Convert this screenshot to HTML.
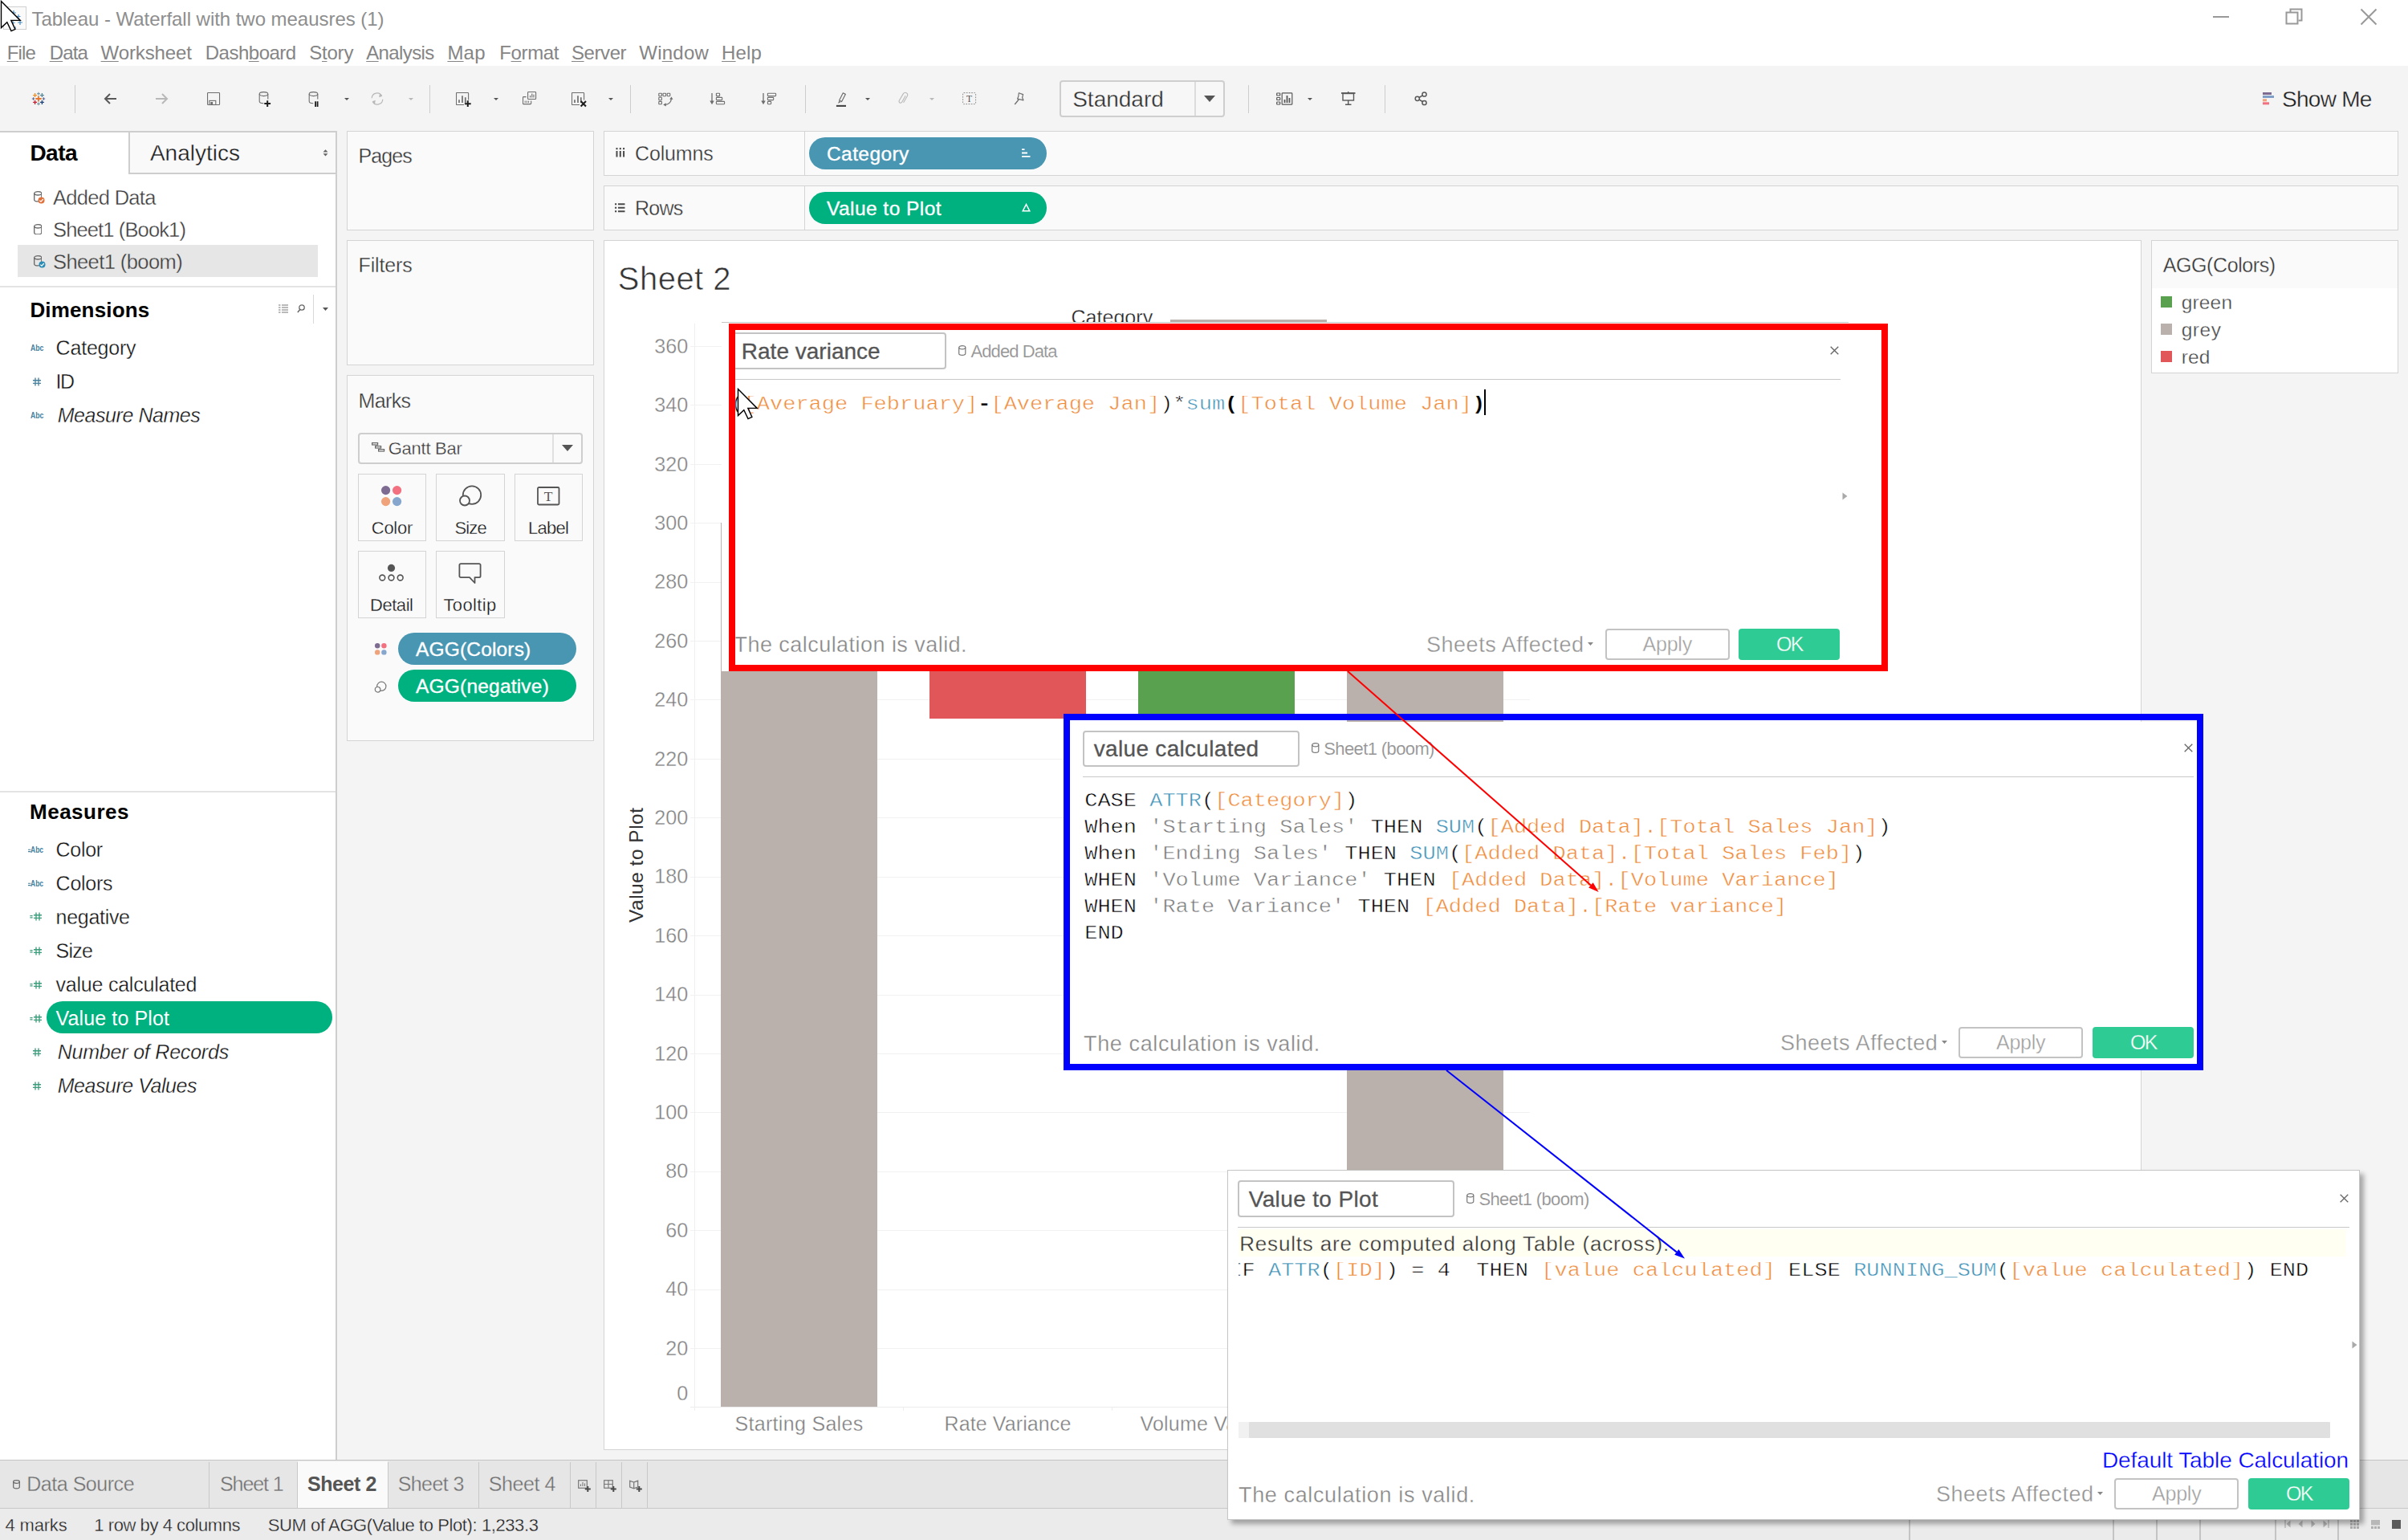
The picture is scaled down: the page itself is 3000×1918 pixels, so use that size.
<!DOCTYPE html>
<html lang="en"><head><meta charset="utf-8"><title>Tableau - Waterfall with two meausres (1)</title>
<style>
html,body{margin:0;padding:0;}
body{width:3000px;height:1918px;position:relative;overflow:hidden;background:#f4f4f4;font-family:"Liberation Sans",sans-serif;}
div,span.t,svg.i{position:absolute;box-sizing:border-box;}
span.t{white-space:pre;display:block;}
u{text-decoration:underline;text-underline-offset:2px;text-decoration-thickness:1.2px;}
</style></head><body>
<header aria-label="Title bar">
<div style="left:0px;top:0px;width:3000px;height:82px;background:#fff;"></div>
<svg class="i" style="left:4px;top:8px;" width="31" height="31" viewBox="0 0 31 31"><rect x="0.5" y="0.5" width="28" height="28" fill="#fafafa" stroke="#d0d0d0"/><g stroke="#4e8fc0" stroke-width="1.2"><path d="M13 5v6M10 8h6M19 10v5M16.5 12.5h5M12 18v5M9.5 20.5h5M21 17v6M18 20h6M15 25v3"/></g></svg>
<span class="t" style="left:39.50px;top:12.48px;font-size:24px;line-height:24px;color:#8e8e8e;letter-spacing:-0.039px;">Tableau - Waterfall with two meausres (1)</span>
<div style="left:2757px;top:20px;width:20px;height:2px;background:#999;"></div>
<svg class="i" style="left:2847px;top:10px;" width="22" height="22" viewBox="0 0 22 22"><path d="M6.5 5.5 V1.5 H20.5 V15.5 H16.5" fill="none" stroke="#999" stroke-width="2"/><rect x="1.5" y="5.5" width="14" height="14" fill="none" stroke="#999" stroke-width="2"/></svg>
<svg class="i" style="left:2940px;top:10px;" width="22" height="22" viewBox="0 0 22 22"><path d="M1.5 1.5 L20.5 20.5 M20.5 1.5 L1.5 20.5" stroke="#999" stroke-width="2" fill="none"/></svg>
</header>
<nav aria-label="Menu bar">
<span class="t" style="left:8.70px;top:53.98px;font-size:24px;line-height:24px;color:#858585;letter-spacing:-0.843px;"><u>F</u>ile</span>
<span class="t" style="left:61.70px;top:53.98px;font-size:24px;line-height:24px;color:#858585;letter-spacing:-0.849px;"><u>D</u>ata</span>
<span class="t" style="left:125.60px;top:53.98px;font-size:24px;line-height:24px;color:#858585;letter-spacing:-0.119px;"><u>W</u>orksheet</span>
<span class="t" style="left:255.80px;top:53.98px;font-size:24px;line-height:24px;color:#858585;letter-spacing:-0.512px;">Dash<u>b</u>oard</span>
<span class="t" style="left:385.20px;top:53.98px;font-size:24px;line-height:24px;color:#858585;letter-spacing:-0.203px;">S<u>t</u>ory</span>
<span class="t" style="left:456.20px;top:53.98px;font-size:24px;line-height:24px;color:#858585;letter-spacing:-0.608px;"><u>A</u>nalysis</span>
<span class="t" style="left:557.40px;top:53.98px;font-size:24px;line-height:24px;color:#858585;letter-spacing:0.204px;"><u>M</u>ap</span>
<span class="t" style="left:622.30px;top:53.98px;font-size:24px;line-height:24px;color:#858585;letter-spacing:-0.385px;">F<u>o</u>rmat</span>
<span class="t" style="left:712.00px;top:53.98px;font-size:24px;line-height:24px;color:#858585;letter-spacing:-0.415px;"><u>S</u>erver</span>
<span class="t" style="left:796.30px;top:53.98px;font-size:24px;line-height:24px;color:#858585;letter-spacing:0.223px;">Wi<u>n</u>dow</span>
<span class="t" style="left:899.10px;top:53.98px;font-size:24px;line-height:24px;color:#858585;letter-spacing:0.135px;"><u>H</u>elp</span>
</nav>
<section aria-label="Toolbar">
<svg class="i" style="left:38.5px;top:114px;" width="18" height="18" viewBox="0 0 18 18"><path d="M5.4 9H12.6M9 5.4V12.6" stroke="#e8762c" stroke-width="1.8"/><path d="M7.2 2.6H10.8M9 0.8V4.4" stroke="#7099a6" stroke-width="1.1"/><path d="M7.2 15.4H10.8M9 13.6V17.2" stroke="#7099a6" stroke-width="1.1"/><path d="M0.8 9H4.4M2.6 7.2V10.8" stroke="#5b6591" stroke-width="1.1"/><path d="M13.6 9H17.2M15.4 7.2V10.8" stroke="#5b6591" stroke-width="1.1"/><path d="M2.0999999999999996 4.6H7.1M4.6 2.0999999999999996V7.1" stroke="#eb912c" stroke-width="1.4"/><path d="M10.9 4.6H15.9M13.4 2.0999999999999996V7.1" stroke="#59879b" stroke-width="1.4"/><path d="M2.0999999999999996 13.4H7.1M4.6 10.9V15.9" stroke="#c72035" stroke-width="1.4"/><path d="M10.9 13.4H15.9M13.4 10.9V15.9" stroke="#1f447e" stroke-width="1.4"/></svg>
<div style="left:92.9px;top:106px;width:1.2px;height:35px;background:#cdcdcd;"></div>
<svg class="i" style="left:129.0px;top:116.0px;" width="17" height="14" viewBox="0 0 17 14"><path d="M16 7 H2 M8 1 L2 7 L8 13" fill="none" stroke="#595959" stroke-width="2"/></svg>
<svg class="i" style="left:193.0px;top:116.0px;" width="17" height="14" viewBox="0 0 17 14"><path d="M1 7 H15 M9 1 L15 7 L9 13" fill="none" stroke="#b8b8b8" stroke-width="2"/></svg>
<svg class="i" style="left:258px;top:115px;" width="17" height="17" viewBox="0 0 17 17"><rect x="0.55" y="0.55" width="15" height="15" rx="0.8" fill="none" stroke="#6e6e6e" stroke-width="1.1"/><rect x="2.8" y="10.4" width="8" height="5.1" fill="none" stroke="#6e6e6e" stroke-width="1.1"/><rect x="4.3" y="12" width="2.8" height="3.4" fill="#6e6e6e"/></svg>
<svg class="i" style="left:322px;top:114px;" width="18" height="20" viewBox="0 0 18 20"><ellipse cx="6.5" cy="3.1" rx="5.3" ry="2.5" fill="none" stroke="#6e6e6e" stroke-width="1.1"/><path d="M1.2 3.1 V12.2 A5.3 2.5 0 0 0 6.3 14.7" fill="none" stroke="#6e6e6e" stroke-width="1.1"/><path d="M11.8 3.1 V9.4" fill="none" stroke="#6e6e6e" stroke-width="1.1"/><path d="M7.3 15.1h7.8M11.2 11.2v7.8" stroke="#1e1e1e" stroke-width="2" fill="none"/></svg>
<svg class="i" style="left:384.4px;top:114px;" width="18" height="20" viewBox="0 0 18 20"><ellipse cx="6.5" cy="3.1" rx="5.3" ry="2.5" fill="none" stroke="#6e6e6e" stroke-width="1.1"/><path d="M1.2 3.1 V12.2 A5.3 2.5 0 0 0 6.3 14.7" fill="none" stroke="#6e6e6e" stroke-width="1.1"/><path d="M11.8 3.1 V9.4" fill="none" stroke="#6e6e6e" stroke-width="1.1"/><path d="M9.1 12.2v6.7M11.6 12.2v6.7" stroke="#1e1e1e" stroke-width="1.8" fill="none"/></svg>
<svg class="i" style="left:428.5px;top:122.0px;" width="6" height="3" viewBox="0 0 6 3"><path d="M0 0 H6 L3.0 3 Z" fill="#555"/></svg>
<svg class="i" style="left:461px;top:114px;" width="18" height="18" viewBox="0 0 18 18"><path d="M2.2 8.2 A6.6 6.6 0 0 1 14.6 5.4 M15.8 9.8 A6.6 6.6 0 0 1 3.4 12.6" fill="none" stroke="#b8b8b8" stroke-width="1.2"/><path d="M12 2.6 L15.3 5.8 L11.2 7.2 Z" fill="#b8b8b8"/><path d="M6 15.4 L2.7 12.2 L6.8 10.8 Z" fill="#b8b8b8"/></svg>
<svg class="i" style="left:508.5px;top:122.0px;" width="6" height="3" viewBox="0 0 6 3"><path d="M0 0 H6 L3.0 3 Z" fill="#b8b8b8"/></svg>
<div style="left:534.9px;top:106px;width:1.2px;height:35px;background:#cdcdcd;"></div>
<svg class="i" style="left:568px;top:115px;" width="20" height="20" viewBox="0 0 20 20"><path d="M10 15.55 H1.3 a0.8 0.8 0 0 1 -0.8 -0.8 V1.3 a0.8 0.8 0 0 1 0.8 -0.8 H14.8 a0.8 0.8 0 0 1 0.8 0.8 V9.5" fill="none" stroke="#6e6e6e" stroke-width="1.1"/><path d="M4 12.9v-3.7M8 12.9v-8.6M11.8 12.9v-6.6" stroke="#6e6e6e" stroke-width="1.7"/><path d="M10.9 14.2h7.8M14.8 10.3v7.8" stroke="#1e1e1e" stroke-width="2"/></svg>
<svg class="i" style="left:614.5px;top:122.0px;" width="6" height="3" viewBox="0 0 6 3"><path d="M0 0 H6 L3.0 3 Z" fill="#555"/></svg>
<svg class="i" style="left:651px;top:114px;" width="18" height="18" viewBox="0 0 18 18"><rect x="6.6" y="0.55" width="10" height="9" rx="0.8" fill="#f4f4f4" stroke="#6e6e6e" stroke-width="1.1"/><path d="M9.6 7.4v-2.4M11.8 7.4v-5M14 7.4v-3.6" stroke="#6e6e6e" stroke-width="1.1"/><path d="M4.6 6.6 H1.3 a0.8 0.8 0 0 0 -0.8 0.8 V14.8 a0.8 0.8 0 0 0 0.8 0.8 H9.9 a0.8 0.8 0 0 0 0.8 -0.8 V11.6" fill="none" stroke="#6e6e6e" stroke-width="1.1"/><path d="M3.2 14v-2.4M5.4 14v-2.4M7.6 14v-2.4" stroke="#6e6e6e" stroke-width="1"/></svg>
<svg class="i" style="left:712.2px;top:115px;" width="20" height="20" viewBox="0 0 20 20"><path d="M10 15.55 H1.3 a0.8 0.8 0 0 1 -0.8 -0.8 V1.3 a0.8 0.8 0 0 1 0.8 -0.8 H14.8 a0.8 0.8 0 0 1 0.8 0.8 V9.5" fill="none" stroke="#6e6e6e" stroke-width="1.1"/><path d="M4 12.9v-3.7M8 12.9v-8.6M11.8 12.9v-6.6" stroke="#6e6e6e" stroke-width="1.7"/><path d="M11.6 11l6.4 6.4M18 11l-6.4 6.4" stroke="#1e1e1e" stroke-width="2.1"/></svg>
<svg class="i" style="left:758.0px;top:122.0px;" width="6" height="3" viewBox="0 0 6 3"><path d="M0 0 H6 L3.0 3 Z" fill="#555"/></svg>
<div style="left:784.9px;top:106px;width:1.2px;height:35px;background:#cdcdcd;"></div>
<svg class="i" style="left:820px;top:115px;" width="19" height="18" viewBox="0 0 19 18"><rect x="0.8" y="1.3" width="3.6" height="3.4" rx="0.6" fill="none" stroke="#6e6e6e" stroke-width="1.1"/><rect x="6" y="1.3" width="3.6" height="3.4" rx="0.6" fill="none" stroke="#6e6e6e" stroke-width="1.1"/><rect x="11.2" y="1.3" width="3.6" height="3.4" rx="0.6" fill="none" stroke="#6e6e6e" stroke-width="1.1"/><rect x="0.8" y="6.3" width="3.6" height="3.4" rx="0.6" fill="none" stroke="#6e6e6e" stroke-width="1.1"/><rect x="0.8" y="11.4" width="3.6" height="3.4" rx="0.6" fill="none" stroke="#6e6e6e" stroke-width="1.1"/><path d="M16.2 8.2 C16.4 12 13 15.2 8.6 15.4" fill="none" stroke="#6e6e6e" stroke-width="1.3"/><path d="M14.2 8.6 L16.6 5.4 L18.4 9 Z M9.6 13.2 L6.2 15.5 L9.8 17.6 Z" fill="#6e6e6e"/></svg>
<svg class="i" style="left:884.2px;top:115px;" width="20" height="17" viewBox="0 0 20 17"><path d="M3 1 V13" stroke="#6e6e6e" stroke-width="1.3" fill="none"/><path d="M0.3 10.6 L3 15.2 L5.7 10.6 Z" fill="#6e6e6e"/><rect x="8.4" y="1.3" width="4.2" height="3.3" rx="0.6" fill="none" stroke="#6e6e6e" stroke-width="1.1"/><rect x="8.4" y="6.35" width="7.3" height="3.3" rx="0.6" fill="none" stroke="#6e6e6e" stroke-width="1.1"/><rect x="8.4" y="11.4" width="10.2" height="3.3" rx="0.6" fill="none" stroke="#6e6e6e" stroke-width="1.1"/></svg>
<svg class="i" style="left:948.2px;top:115px;" width="20" height="17" viewBox="0 0 20 17"><path d="M3 1 V13" stroke="#6e6e6e" stroke-width="1.3" fill="none"/><path d="M0.3 10.6 L3 15.2 L5.7 10.6 Z" fill="#6e6e6e"/><rect x="8.4" y="1.3" width="10.2" height="3.3" rx="0.6" fill="none" stroke="#6e6e6e" stroke-width="1.1"/><rect x="8.4" y="6.35" width="7.3" height="3.3" rx="0.6" fill="none" stroke="#6e6e6e" stroke-width="1.1"/><rect x="8.4" y="11.4" width="4.2" height="3.3" rx="0.6" fill="none" stroke="#6e6e6e" stroke-width="1.1"/></svg>
<div style="left:1002.9px;top:106px;width:1.2px;height:35px;background:#cdcdcd;"></div>
<svg class="i" style="left:1041px;top:114px;" width="14" height="20" viewBox="0 0 14 20"><path d="M9.3 1.8 L12.3 3.4 L7.6 12.6 L4.6 11 Z" fill="none" stroke="#6e6e6e" stroke-width="1.2" stroke-linejoin="round"/><path d="M4.4 11.6 L3 14.8 L6.4 13.2 Z" fill="#6e6e6e"/><path d="M0.9 17.9 H13" stroke="#444" stroke-width="2.1"/></svg>
<svg class="i" style="left:1077.5px;top:122.0px;" width="6" height="3" viewBox="0 0 6 3"><path d="M0 0 H6 L3.0 3 Z" fill="#555"/></svg>
<svg class="i" style="left:1118px;top:114px;" width="14" height="18" viewBox="0 0 14 18"><path d="M10.2 5.2 L5.6 13.2 a1.9 1.9 0 0 1 -3.3 -1.9 L7.4 2.6 a2.9 2.9 0 0 1 5 2.9 L7.6 13.8" fill="none" stroke="#b8b8b8" stroke-width="1.1"/></svg>
<svg class="i" style="left:1157.5px;top:122.0px;" width="6" height="3" viewBox="0 0 6 3"><path d="M0 0 H6 L3.0 3 Z" fill="#b8b8b8"/></svg>
<svg class="i" style="left:1199px;top:115.4px;" width="18" height="16" viewBox="0 0 18 16"><rect x="0.6" y="0.6" width="16" height="14" rx="1" fill="none" stroke="#8a8a8a" stroke-width="1" stroke-dasharray="1.7 1.5"/></svg>
<span class="t" style="left:1204.09px;top:117.77px;font-size:11.5px;line-height:11.5px;color:#555;font-family:'Liberation Serif',serif;">T</span>
<svg class="i" style="left:1263px;top:115px;" width="14" height="16" viewBox="0 0 14 16"><path d="M6.3 0.8 L11.6 2.6 L10.6 6.6 L12 9.8 L4.6 8.2 L5.8 5 Z" fill="none" stroke="#6e6e6e" stroke-width="1.2" stroke-linejoin="round"/><path d="M6.2 9 L1.2 15" stroke="#6e6e6e" stroke-width="1.3"/></svg>
<div style="left:1320px;top:100px;width:206px;height:46px;background:#f7f7f7;border:2px solid #cecece;border-radius:4px;"></div>
<div style="left:1488px;top:102px;width:2px;height:42px;background:#dcdcdc;"></div>
<span class="t" style="left:1336.20px;top:109.60px;font-size:28px;line-height:28px;color:#2f2f2f;-webkit-text-stroke:0.35px #f7f7f7;">Standard</span>
<svg class="i" style="left:1499.7px;top:118.7px;" width="14" height="8" viewBox="0 0 14 8"><path d="M0 0 H14 L7.0 8 Z" fill="#555"/></svg>
<div style="left:1555.1000000000001px;top:106px;width:1.2px;height:35px;background:#cdcdcd;"></div>
<svg class="i" style="left:1590px;top:115.3px;" width="21" height="17" viewBox="0 0 21 17"><g fill="none" stroke="#595959" stroke-width="1.2"><rect x="0.7" y="1" width="4" height="3" rx="0.5"/><rect x="0.7" y="6.5" width="4" height="3" rx="0.5"/><rect x="0.7" y="12" width="4" height="3" rx="0.5"/><rect x="7.2" y="0.8" width="12.6" height="14.4" rx="0.8"/></g><path d="M10.5 13v-4M13.5 13v-9M16.5 13v-6" stroke="#595959" stroke-width="1.8"/></svg>
<svg class="i" style="left:1629.3px;top:122.0px;" width="6" height="3" viewBox="0 0 6 3"><path d="M0 0 H6 L3.0 3 Z" fill="#555"/></svg>
<svg class="i" style="left:1671px;top:114px;" width="18" height="18" viewBox="0 0 18 18"><path d="M0 2 H17.5" stroke="#595959" stroke-width="1.8"/><rect x="2" y="2.5" width="13.5" height="8.5" fill="none" stroke="#595959" stroke-width="1.4"/><path d="M8.7 0 V2 M8.7 11 V16 M5 16.3 H12.5" stroke="#595959" stroke-width="1.4" fill="none"/></svg>
<div style="left:1724.9px;top:106px;width:1.2px;height:35px;background:#cdcdcd;"></div>
<svg class="i" style="left:1762px;top:114px;" width="17" height="18" viewBox="0 0 17 18"><g fill="none" stroke="#595959" stroke-width="1.5"><circle cx="12.5" cy="3.5" r="2.6"/><circle cx="3.8" cy="8.8" r="2.6"/><circle cx="12.5" cy="14" r="2.6"/><path d="M6 7.5 L10.3 4.8 M6 10 L10.3 12.7"/></g></svg>
<svg class="i" style="left:2819px;top:115px;" width="15" height="16" viewBox="0 0 15 16"><rect x="0" y="0" width="11" height="3" fill="#7e6b92"/><rect x="0" y="4" width="14" height="3" fill="#7f9fc9"/><rect x="0" y="8.3" width="5" height="3" fill="#f0a27a"/><rect x="0" y="12.3" width="8" height="3" fill="#f2707f"/></svg>
<span class="t" style="left:2843.00px;top:109.60px;font-size:28px;line-height:28px;color:#1a1a1a;letter-spacing:-0.731px;-webkit-text-stroke:0.35px #f4f4f4;">Show Me</span>
</section>
<aside aria-label="Data pane">
<div style="left:0px;top:163px;width:420px;height:1657px;background:#fff;"></div>
<div style="left:418px;top:163px;width:2px;height:1657px;background:#cecece;"></div>
<div style="left:0px;top:163px;width:420px;height:2px;background:#cecece;"></div>
<div style="left:160px;top:163px;width:260px;height:54px;background:#f9f9f9;border:2px solid #cecece;"></div>
<span class="t" style="left:37.40px;top:176.80px;font-size:28px;line-height:28px;color:#000;font-weight:bold;letter-spacing:-0.498px;">Data</span>
<span class="t" style="left:186.90px;top:176.80px;font-size:28px;line-height:28px;color:#1a1a1a;letter-spacing:0.006px;-webkit-text-stroke:0.35px #f9f9f9;">Analytics</span>
<svg class="i" style="left:402.2px;top:185.5px;" width="7" height="9" viewBox="0 0 7 9"><path d="M0.5 3.6 L3.5 0.3 L6.5 3.6 Z M0.5 5.2 L3.5 8.5 L6.5 5.2 Z" fill="#666"/></svg>
<svg class="i" style="left:41.5px;top:238.3px;" width="10.5" height="13.5" viewBox="0 0 10.5 13.5"><ellipse cx="5.25" cy="2.8600000000000003" rx="4.55" ry="2.16" fill="none" stroke="#666" stroke-width="1.3"/><path d="M0.7 2.8600000000000003 V10.64 A4.55 2.16 0 0 0 9.8 10.64 V2.8600000000000003" fill="none" stroke="#666" stroke-width="1.3"/></svg>
<svg class="i" style="left:47px;top:245.3px;" width="9" height="9" viewBox="0 0 9 9"><circle cx="4.5" cy="4.5" r="4" fill="#e0703a"/><path d="M2.3 4.6 L4 6.2 L6.8 3" fill="none" stroke="#fff" stroke-width="1.2"/></svg>
<span class="t" style="left:66.00px;top:233.51px;font-size:25.5px;line-height:25.5px;color:#3c3c3c;letter-spacing:-0.699px;-webkit-text-stroke:0.35px #fff;">Added Data</span>
<svg class="i" style="left:41.5px;top:278.5px;" width="10.5" height="13.5" viewBox="0 0 10.5 13.5"><ellipse cx="5.25" cy="2.8600000000000003" rx="4.55" ry="2.16" fill="none" stroke="#666" stroke-width="1.3"/><path d="M0.7 2.8600000000000003 V10.64 A4.55 2.16 0 0 0 9.8 10.64 V2.8600000000000003" fill="none" stroke="#666" stroke-width="1.3"/></svg>
<span class="t" style="left:66.00px;top:274.11px;font-size:25.5px;line-height:25.5px;color:#3c3c3c;letter-spacing:-0.871px;-webkit-text-stroke:0.35px #fff;">Sheet1 (Book1)</span>
<div style="left:22px;top:305px;width:374px;height:40px;background:#e6e6e6;"></div>
<svg class="i" style="left:41.5px;top:318.3px;" width="10.5" height="13.5" viewBox="0 0 10.5 13.5"><ellipse cx="5.25" cy="2.8600000000000003" rx="4.55" ry="2.16" fill="none" stroke="#666" stroke-width="1.3"/><path d="M0.7 2.8600000000000003 V10.64 A4.55 2.16 0 0 0 9.8 10.64 V2.8600000000000003" fill="none" stroke="#666" stroke-width="1.3"/></svg>
<svg class="i" style="left:48px;top:325px;" width="9" height="9" viewBox="0 0 9 9"><circle cx="4.5" cy="4.5" r="4" fill="#2b8cb5"/><path d="M2.3 4.6 L4 6.2 L6.8 3" fill="none" stroke="#fff" stroke-width="1.2"/></svg>
<span class="t" style="left:66.00px;top:313.71px;font-size:25.5px;line-height:25.5px;color:#3c3c3c;letter-spacing:-0.583px;-webkit-text-stroke:0.35px #e6e6e6;">Sheet1 (boom)</span>
<div style="left:0px;top:356px;width:418px;height:2px;background:#e3e3e3;"></div>
<span class="t" style="left:37.40px;top:372.99px;font-size:26px;line-height:26px;color:#000;font-weight:bold;letter-spacing:0.163px;">Dimensions</span>
<svg class="i" style="left:347px;top:379px;" width="12" height="11" viewBox="0 0 12 11"><path d="M0 1H2.5M4 1H12M0 4H2.5M4 4H12M0 7H2.5M4 7H12M0 10H2.5M4 10H12" stroke="#777" stroke-width="1.2"/></svg>
<svg class="i" style="left:370px;top:379px;" width="10" height="11" viewBox="0 0 10 11"><circle cx="6" cy="4" r="3.2" fill="none" stroke="#666" stroke-width="1.3"/><path d="M3.8 6.5 L0.8 10" stroke="#666" stroke-width="1.5"/></svg>
<div style="left:390px;top:367px;width:1px;height:36px;background:#d9d9d9;"></div>
<svg class="i" style="left:401.7px;top:383.0px;" width="7" height="4" viewBox="0 0 7 4"><path d="M0 0 H7 L3.5 4 Z" fill="#555"/></svg>
<span class="t" style="left:38.00px;top:429.14px;font-size:10px;line-height:10px;color:#4682a0;font-weight:bold;transform:scaleX(0.87);transform-origin:0 0;">Abc</span>
<span class="t" style="left:69.60px;top:421.04px;font-size:25px;line-height:25px;color:#111;letter-spacing:-0.205px;-webkit-text-stroke:0.35px #fff;">Category</span>
<svg class="i" style="left:36px;top:469.6px;" width="16" height="11" viewBox="0 0 16 11"><path d="M8 0.5V10.5M12 0.5V10.5M5 3.7H15M5 7.3H15" stroke="#4682a0" stroke-width="1.35" fill="none"/></svg>
<span class="t" style="left:69.60px;top:463.04px;font-size:25px;line-height:25px;color:#111;letter-spacing:-1.600px;-webkit-text-stroke:0.35px #fff;">ID</span>
<span class="t" style="left:38.00px;top:513.13px;font-size:10px;line-height:10px;color:#4682a0;font-weight:bold;transform:scaleX(0.87);transform-origin:0 0;">Abc</span>
<span class="t" style="left:71.70px;top:505.04px;font-size:25px;line-height:25px;color:#111;font-style:italic;letter-spacing:-0.438px;-webkit-text-stroke:0.35px #fff;">Measure Names</span>
<div style="left:0px;top:985px;width:418px;height:2px;background:#e3e3e3;"></div>
<span class="t" style="left:37.00px;top:998.29px;font-size:26px;line-height:26px;color:#000;font-weight:bold;letter-spacing:0.505px;">Measures</span>
<svg class="i" style="left:34.5px;top:1056.6px;" width="4" height="6" viewBox="0 0 4 6"><path d="M0 1.2H3.3M0 3.6H3.3" stroke="#4682a0" stroke-width="1.1"/></svg>
<span class="t" style="left:38.30px;top:1054.13px;font-size:10px;line-height:10px;color:#4682a0;font-weight:bold;transform:scaleX(0.85);transform-origin:0 0;">Abc</span>
<span class="t" style="left:69.60px;top:1046.04px;font-size:25px;line-height:25px;color:#111;letter-spacing:-0.308px;-webkit-text-stroke:0.35px #fff;">Color</span>
<svg class="i" style="left:34.5px;top:1098.6px;" width="4" height="6" viewBox="0 0 4 6"><path d="M0 1.2H3.3M0 3.6H3.3" stroke="#4682a0" stroke-width="1.1"/></svg>
<span class="t" style="left:38.30px;top:1096.13px;font-size:10px;line-height:10px;color:#4682a0;font-weight:bold;transform:scaleX(0.85);transform-origin:0 0;">Abc</span>
<span class="t" style="left:69.60px;top:1088.04px;font-size:25px;line-height:25px;color:#111;letter-spacing:-0.257px;-webkit-text-stroke:0.35px #fff;">Colors</span>
<svg class="i" style="left:36.6px;top:1136.4px;" width="16" height="11" viewBox="0 0 16 11"><path d="M8 0.5V10.5M12 0.5V10.5M5 3.7H15M5 7.3H15" stroke="#3c9d7b" stroke-width="1.35" fill="none"/><path d="M0.4 4.6H3.6M0.4 6.9H3.6" stroke="#3c9d7b" stroke-width="1.1" fill="none"/></svg>
<span class="t" style="left:69.60px;top:1129.84px;font-size:25px;line-height:25px;color:#111;letter-spacing:-0.302px;-webkit-text-stroke:0.35px #fff;">negative</span>
<svg class="i" style="left:36.6px;top:1178.5px;" width="16" height="11" viewBox="0 0 16 11"><path d="M8 0.5V10.5M12 0.5V10.5M5 3.7H15M5 7.3H15" stroke="#3c9d7b" stroke-width="1.35" fill="none"/><path d="M0.4 4.6H3.6M0.4 6.9H3.6" stroke="#3c9d7b" stroke-width="1.1" fill="none"/></svg>
<span class="t" style="left:69.60px;top:1171.94px;font-size:25px;line-height:25px;color:#111;letter-spacing:-0.808px;-webkit-text-stroke:0.35px #fff;">Size</span>
<svg class="i" style="left:36.6px;top:1220.6px;" width="16" height="11" viewBox="0 0 16 11"><path d="M8 0.5V10.5M12 0.5V10.5M5 3.7H15M5 7.3H15" stroke="#3c9d7b" stroke-width="1.35" fill="none"/><path d="M0.4 4.6H3.6M0.4 6.9H3.6" stroke="#3c9d7b" stroke-width="1.1" fill="none"/></svg>
<span class="t" style="left:69.60px;top:1214.04px;font-size:25px;line-height:25px;color:#111;letter-spacing:-0.230px;-webkit-text-stroke:0.35px #fff;">value calculated</span>
<div style="left:58px;top:1247px;width:356px;height:40px;background:#00b180;border-radius:20px;"></div>
<svg class="i" style="left:36.6px;top:1262.6px;" width="16" height="11" viewBox="0 0 16 11"><path d="M8 0.5V10.5M12 0.5V10.5M5 3.7H15M5 7.3H15" stroke="#3c9d7b" stroke-width="1.35" fill="none"/><path d="M0.4 4.6H3.6M0.4 6.9H3.6" stroke="#3c9d7b" stroke-width="1.1" fill="none"/></svg>
<span class="t" style="left:69.60px;top:1256.04px;font-size:25px;line-height:25px;color:#fff;letter-spacing:0.115px;">Value to Plot</span>
<svg class="i" style="left:36px;top:1304.6px;" width="16" height="11" viewBox="0 0 16 11"><path d="M8 0.5V10.5M12 0.5V10.5M5 3.7H15M5 7.3H15" stroke="#3c9d7b" stroke-width="1.35" fill="none"/></svg>
<span class="t" style="left:71.70px;top:1298.04px;font-size:25px;line-height:25px;color:#111;font-style:italic;letter-spacing:-0.203px;-webkit-text-stroke:0.35px #fff;">Number of Records</span>
<svg class="i" style="left:36px;top:1346.6px;" width="16" height="11" viewBox="0 0 16 11"><path d="M8 0.5V10.5M12 0.5V10.5M5 3.7H15M5 7.3H15" stroke="#3c9d7b" stroke-width="1.35" fill="none"/></svg>
<span class="t" style="left:71.70px;top:1340.04px;font-size:25px;line-height:25px;color:#111;font-style:italic;letter-spacing:-0.459px;-webkit-text-stroke:0.35px #fff;">Measure Values</span>
</aside>
<section aria-label="Cards">
<div style="left:432px;top:163px;width:308px;height:124px;background:#fafafa;border:1px solid #d4d4d4;"></div>
<span class="t" style="left:446.50px;top:182.44px;font-size:25px;line-height:25px;color:#333;letter-spacing:-0.897px;-webkit-text-stroke:0.35px #fafafa;">Pages</span>
<div style="left:432px;top:299px;width:308px;height:156px;background:#fafafa;border:1px solid #d4d4d4;"></div>
<span class="t" style="left:446.50px;top:318.24px;font-size:25px;line-height:25px;color:#333;letter-spacing:-0.122px;-webkit-text-stroke:0.35px #fafafa;">Filters</span>
<div style="left:432px;top:467px;width:308px;height:456px;background:#fafafa;border:1px solid #d4d4d4;"></div>
<span class="t" style="left:446.50px;top:486.64px;font-size:25px;line-height:25px;color:#333;letter-spacing:-0.611px;-webkit-text-stroke:0.35px #fafafa;">Marks</span>
<div style="left:446px;top:539px;width:280px;height:38.5px;background:#fafafa;border:2px solid #cecece;border-radius:4px;"></div>
<div style="left:688px;top:541px;width:2px;height:34.5px;background:#e0e0e0;"></div>
<svg class="i" style="left:463px;top:551px;" width="17" height="12" viewBox="0 0 17 12"><g fill="none" stroke="#666" stroke-width="1.2"><rect x="0.6" y="0.6" width="7" height="2.4"/><rect x="4.6" y="4.6" width="7" height="2.4"/><rect x="8.6" y="8.6" width="7" height="2.4"/></g></svg>
<span class="t" style="left:483.70px;top:547.68px;font-size:22px;line-height:22px;color:#333;letter-spacing:-0.251px;-webkit-text-stroke:0.35px #fafafa;">Gantt Bar</span>
<svg class="i" style="left:700.0px;top:554.4px;" width="14" height="8" viewBox="0 0 14 8"><path d="M0 0 H14 L7.0 8 Z" fill="#555"/></svg>
<div style="left:446px;top:590px;width:85px;height:84px;background:#fafafa;border:1px solid #d4d4d4;"></div>
<span class="t" style="left:462.80px;top:647.48px;font-size:22px;line-height:22px;color:#111;letter-spacing:-0.275px;-webkit-text-stroke:0.35px #fafafa;">Color</span>
<div style="left:543px;top:590px;width:86px;height:84px;background:#fafafa;border:1px solid #d4d4d4;"></div>
<span class="t" style="left:566.60px;top:647.48px;font-size:22px;line-height:22px;color:#111;letter-spacing:-0.899px;-webkit-text-stroke:0.35px #fafafa;">Size</span>
<div style="left:641px;top:590px;width:85px;height:84px;background:#fafafa;border:1px solid #d4d4d4;"></div>
<span class="t" style="left:658.00px;top:647.48px;font-size:22px;line-height:22px;color:#111;letter-spacing:-0.766px;-webkit-text-stroke:0.35px #fafafa;">Label</span>
<div style="left:446px;top:686px;width:85px;height:84px;background:#fafafa;border:1px solid #d4d4d4;"></div>
<span class="t" style="left:461.00px;top:743.38px;font-size:22px;line-height:22px;color:#111;letter-spacing:-0.458px;-webkit-text-stroke:0.35px #fafafa;">Detail</span>
<div style="left:543px;top:686px;width:86px;height:84px;background:#fafafa;border:1px solid #d4d4d4;"></div>
<span class="t" style="left:552.50px;top:743.38px;font-size:22px;line-height:22px;color:#111;letter-spacing:0.344px;-webkit-text-stroke:0.35px #fafafa;">Tooltip</span>
<svg class="i" style="left:473.9px;top:603.8px;" width="27.2" height="27.2" viewBox="0 0 27.2 27.2"><circle cx="6.6" cy="6.6" r="5.6" fill="#7e6b92"/><circle cx="20.6" cy="6.6" r="5.6" fill="#f2707f"/><circle cx="6.6" cy="20.6" r="5.6" fill="#f0a27a"/><circle cx="20.6" cy="20.6" r="5.6" fill="#86a6cd"/></svg>
<svg class="i" style="left:571px;top:603px;" width="32" height="30" viewBox="0 0 32 30"><g fill="none" stroke="#555" stroke-width="1.8"><circle cx="17" cy="13.6" r="11.2"/><circle cx="8" cy="20.5" r="6" fill="#fafafa"/></g></svg>
<svg class="i" style="left:669px;top:606px;" width="29" height="24" viewBox="0 0 29 24"><rect x="1" y="1" width="26.5" height="21.5" rx="1.5" fill="none" stroke="#555" stroke-width="1.8"/></svg>
<span class="t" style="left:677.66px;top:610.24px;font-size:17.5px;line-height:17.5px;color:#555;font-family:'Liberation Serif',serif;">T</span>
<svg class="i" style="left:470px;top:701px;" width="36" height="24" viewBox="0 0 36 24"><circle cx="17.5" cy="6.4" r="4.6" fill="#555"/><g fill="none" stroke="#555" stroke-width="1.6"><circle cx="6.3" cy="18.5" r="3.4"/><circle cx="17.5" cy="18.5" r="3.4"/><circle cx="28.7" cy="18.5" r="3.4"/></g></svg>
<svg class="i" style="left:571px;top:701px;" width="30" height="27" viewBox="0 0 30 27"><path d="M3 1.2 H26 a1.6 1.6 0 0 1 1.6 1.6 V16.5 a1.6 1.6 0 0 1 -1.6 1.6 H20.5 V25 L14 18.1 H3 a1.6 1.6 0 0 1 -1.6 -1.6 V2.8 A1.6 1.6 0 0 1 3 1.2 Z" fill="none" stroke="#555" stroke-width="1.8" stroke-linejoin="round"/></svg>
<svg class="i" style="left:465.7px;top:799.5px;" width="16.6" height="16.6" viewBox="0 0 16.6 16.6"><circle cx="4.2" cy="4.2" r="3.2" fill="#7e6b92"/><circle cx="12.399999999999999" cy="4.2" r="3.2" fill="#f2707f"/><circle cx="4.2" cy="12.399999999999999" r="3.2" fill="#f0a27a"/><circle cx="12.399999999999999" cy="12.399999999999999" r="3.2" fill="#86a6cd"/></svg>
<div style="left:496px;top:788px;width:222px;height:40px;background:#4996b2;border-radius:20px;"></div>
<span class="t" style="left:518.00px;top:796.66px;font-size:24.5px;line-height:24.5px;color:#fff;letter-spacing:0.166px;-webkit-text-stroke:0.35px #fff;">AGG(Colors)</span>
<svg class="i" style="left:466px;top:848px;" width="16" height="16" viewBox="0 0 16 16"><g fill="none" stroke="#777" stroke-width="1.2"><circle cx="9.3" cy="6.8" r="5.6"/><circle cx="4.6" cy="10.8" r="3.3" fill="#fafafa"/></g></svg>
<div style="left:496px;top:834px;width:222px;height:40px;background:#00b180;border-radius:20px;"></div>
<span class="t" style="left:518.00px;top:842.66px;font-size:24.5px;line-height:24.5px;color:#fff;letter-spacing:0.200px;-webkit-text-stroke:0.35px #fff;">AGG(negative)</span>
</section>
<section aria-label="Shelves">
<div style="left:752px;top:163px;width:2236px;height:56px;background:#fafafa;border:1px solid #d4d4d4;"></div>
<div style="left:1002px;top:164px;width:1px;height:54px;background:#d4d4d4;"></div>
<svg class="i" style="left:766.5px;top:184px;" width="12" height="12" viewBox="0 0 12 12"><path d="M1.5 0v2.2M1.5 4v7.5M5.8 0v2.2M5.8 4v7.5M10.1 0v2.2M10.1 4v7.5" stroke="#4a4a4a" stroke-width="2"/></svg>
<span class="t" style="left:791.00px;top:178.94px;font-size:25px;line-height:25px;color:#333;letter-spacing:-0.164px;-webkit-text-stroke:0.35px #fafafa;">Columns</span>
<div style="left:1008px;top:171px;width:296px;height:40px;background:#4996b2;border-radius:20px;"></div>
<span class="t" style="left:1030.00px;top:180.06px;font-size:24.5px;line-height:24.5px;color:#fff;letter-spacing:0.411px;-webkit-text-stroke:0.35px #fff;">Category</span>
<svg class="i" style="left:1273px;top:185px;" width="11" height="11" viewBox="0 0 11 11"><path d="M0 1.2H3.5M0 5.5H7M0 9.8H10.5" stroke="#fff" stroke-width="1.8"/></svg>
<div style="left:752px;top:231px;width:2236px;height:56px;background:#fafafa;border:1px solid #d4d4d4;"></div>
<div style="left:1002px;top:232px;width:1px;height:54px;background:#d4d4d4;"></div>
<svg class="i" style="left:766px;top:252.5px;" width="13" height="12" viewBox="0 0 13 12"><path d="M0 1.2H2.2M4 1.2H12.5M0 5.7H2.2M4 5.7H12.5M0 10.2H2.2M4 10.2H12.5" stroke="#4a4a4a" stroke-width="2"/></svg>
<span class="t" style="left:791.00px;top:246.94px;font-size:25px;line-height:25px;color:#333;letter-spacing:-0.778px;-webkit-text-stroke:0.35px #fafafa;">Rows</span>
<div style="left:1008px;top:239px;width:296px;height:40px;background:#00b180;border-radius:20px;"></div>
<span class="t" style="left:1030.00px;top:248.06px;font-size:24.5px;line-height:24.5px;color:#fff;letter-spacing:0.453px;-webkit-text-stroke:0.35px #fff;">Value to Plot</span>
<svg class="i" style="left:1273px;top:253px;" width="11" height="11" viewBox="0 0 11 11"><path d="M5.5 1.5 L9.8 9.8 H1.2 Z" fill="none" stroke="#fff" stroke-width="1.5"/></svg>
</section>
<main aria-label="Sheet 2 view">
<div style="left:752px;top:299px;width:1916px;height:1507px;background:#fff;border:1px solid #d4d4d4;"></div>
<span class="t" style="left:769.80px;top:326.74px;font-size:40px;line-height:40px;color:#333;letter-spacing:0.473px;-webkit-text-stroke:0.6px #fff;">Sheet 2</span>
<span class="t" style="left:1334.50px;top:382.64px;font-size:25px;line-height:25px;color:#222;letter-spacing:0.032px;-webkit-text-stroke:0.35px #fff;">Category</span>
<div style="left:1458px;top:398px;width:195px;height:3.5px;background:#bab0ac;"></div>
<div style="left:860px;top:1751.5px;width:1046px;height:1px;background:#ebebeb;"></div>
<span class="t" style="left:843.18px;top:1723.07px;font-size:25.2px;line-height:25.2px;color:#828282;-webkit-text-stroke:0.35px #fff;">0</span>
<div style="left:860px;top:1678.5px;width:1046px;height:1px;background:#f1f1f1;"></div>
<span class="t" style="left:829.17px;top:1666.66px;font-size:25.2px;line-height:25.2px;color:#828282;-webkit-text-stroke:0.35px #fff;">20</span>
<div style="left:860px;top:1605.5px;width:1046px;height:1px;background:#f1f1f1;"></div>
<span class="t" style="left:829.17px;top:1593.25px;font-size:25.2px;line-height:25.2px;color:#828282;-webkit-text-stroke:0.35px #fff;">40</span>
<div style="left:860px;top:1531.5px;width:1046px;height:1px;background:#f1f1f1;"></div>
<span class="t" style="left:829.17px;top:1519.84px;font-size:25.2px;line-height:25.2px;color:#828282;-webkit-text-stroke:0.35px #fff;">60</span>
<div style="left:860px;top:1458.5px;width:1046px;height:1px;background:#f1f1f1;"></div>
<span class="t" style="left:829.17px;top:1446.43px;font-size:25.2px;line-height:25.2px;color:#828282;-webkit-text-stroke:0.35px #fff;">80</span>
<div style="left:860px;top:1384.5px;width:1046px;height:1px;background:#f1f1f1;"></div>
<span class="t" style="left:815.15px;top:1373.02px;font-size:25.2px;line-height:25.2px;color:#828282;-webkit-text-stroke:0.35px #fff;">100</span>
<div style="left:860px;top:1311.5px;width:1046px;height:1px;background:#f1f1f1;"></div>
<span class="t" style="left:815.15px;top:1299.61px;font-size:25.2px;line-height:25.2px;color:#828282;-webkit-text-stroke:0.35px #fff;">120</span>
<div style="left:860px;top:1238.5px;width:1046px;height:1px;background:#f1f1f1;"></div>
<span class="t" style="left:815.15px;top:1226.20px;font-size:25.2px;line-height:25.2px;color:#828282;-webkit-text-stroke:0.35px #fff;">140</span>
<div style="left:860px;top:1164.5px;width:1046px;height:1px;background:#f1f1f1;"></div>
<span class="t" style="left:815.15px;top:1152.79px;font-size:25.2px;line-height:25.2px;color:#828282;-webkit-text-stroke:0.35px #fff;">160</span>
<div style="left:860px;top:1091.5px;width:1046px;height:1px;background:#f1f1f1;"></div>
<span class="t" style="left:815.15px;top:1079.38px;font-size:25.2px;line-height:25.2px;color:#828282;-webkit-text-stroke:0.35px #fff;">180</span>
<div style="left:860px;top:1017.5px;width:1046px;height:1px;background:#f1f1f1;"></div>
<span class="t" style="left:815.15px;top:1005.97px;font-size:25.2px;line-height:25.2px;color:#828282;-webkit-text-stroke:0.35px #fff;">200</span>
<div style="left:860px;top:944.5px;width:1046px;height:1px;background:#f1f1f1;"></div>
<span class="t" style="left:815.15px;top:932.56px;font-size:25.2px;line-height:25.2px;color:#828282;-webkit-text-stroke:0.35px #fff;">220</span>
<div style="left:860px;top:870.5px;width:1046px;height:1px;background:#f1f1f1;"></div>
<span class="t" style="left:815.15px;top:859.15px;font-size:25.2px;line-height:25.2px;color:#828282;-webkit-text-stroke:0.35px #fff;">240</span>
<div style="left:860px;top:797.5px;width:1046px;height:1px;background:#f1f1f1;"></div>
<span class="t" style="left:815.15px;top:785.74px;font-size:25.2px;line-height:25.2px;color:#828282;-webkit-text-stroke:0.35px #fff;">260</span>
<div style="left:860px;top:724.5px;width:1046px;height:1px;background:#f1f1f1;"></div>
<span class="t" style="left:815.15px;top:712.33px;font-size:25.2px;line-height:25.2px;color:#828282;-webkit-text-stroke:0.35px #fff;">280</span>
<div style="left:860px;top:650.5px;width:1046px;height:1px;background:#f1f1f1;"></div>
<span class="t" style="left:815.15px;top:638.92px;font-size:25.2px;line-height:25.2px;color:#828282;-webkit-text-stroke:0.35px #fff;">300</span>
<div style="left:860px;top:577.5px;width:1046px;height:1px;background:#f1f1f1;"></div>
<span class="t" style="left:815.15px;top:565.51px;font-size:25.2px;line-height:25.2px;color:#828282;-webkit-text-stroke:0.35px #fff;">320</span>
<div style="left:860px;top:503.5px;width:1046px;height:1px;background:#f1f1f1;"></div>
<span class="t" style="left:815.15px;top:492.10px;font-size:25.2px;line-height:25.2px;color:#828282;-webkit-text-stroke:0.35px #fff;">340</span>
<div style="left:860px;top:430.5px;width:1046px;height:1px;background:#f1f1f1;"></div>
<span class="t" style="left:815.15px;top:418.69px;font-size:25.2px;line-height:25.2px;color:#828282;-webkit-text-stroke:0.35px #fff;">360</span>
<div style="left:865px;top:403px;width:1px;height:1354px;background:#efefef;"></div>
<div style="left:1125px;top:1753px;width:1px;height:4px;background:#efefef;"></div>
<div style="left:1385px;top:1753px;width:1px;height:4px;background:#efefef;"></div>
<div style="left:1645px;top:1753px;width:1px;height:4px;background:#efefef;"></div>
<div style="left:721.6px;top:1064.5px;width:143.4px;height:24.5px;transform:rotate(-90deg);transform-origin:50% 50%;"><span class="t" style="left:0;top:0;font-size:24.5px;line-height:24.5px;letter-spacing:0.484px;color:#333;">Value to Plot</span></div>
<div style="left:898px;top:651px;width:195px;height:1101.4px;background:#bab0ac;"></div>
<div style="left:1158px;top:835px;width:195px;height:59.5px;background:#e15759;"></div>
<div style="left:1418px;top:835px;width:195px;height:59.5px;background:#59a14f;"></div>
<div style="left:1678px;top:835px;width:195px;height:667.4000000000001px;background:#bab0ac;"></div>
<span class="t" style="left:915.50px;top:1760.64px;font-size:25px;line-height:25px;color:#7e7e7e;letter-spacing:0.311px;-webkit-text-stroke:0.35px #fff;">Starting Sales</span>
<span class="t" style="left:1176.50px;top:1760.64px;font-size:25px;line-height:25px;color:#7e7e7e;letter-spacing:0.110px;-webkit-text-stroke:0.35px #fff;">Rate Variance</span>
<span class="t" style="left:1420.50px;top:1760.64px;font-size:25px;line-height:25px;color:#7e7e7e;letter-spacing:0.190px;-webkit-text-stroke:0.35px #fff;">Volume Variance</span>
<span class="t" style="left:1703.00px;top:1760.64px;font-size:25px;line-height:25px;color:#7e7e7e;letter-spacing:-0.194px;-webkit-text-stroke:0.35px #fff;">Ending Sales</span>
</main>
<section aria-label="Legend">
<div style="left:2680px;top:299px;width:308px;height:166px;background:#fff;border:1px solid #d4d4d4;"></div>
<div style="left:2681px;top:300px;width:306px;height:59px;background:#fafafa;"></div>
<span class="t" style="left:2694.80px;top:318.04px;font-size:25px;line-height:25px;color:#333;letter-spacing:-0.414px;-webkit-text-stroke:0.35px #fafafa;">AGG(Colors)</span>
<div style="left:2692px;top:369.0px;width:14px;height:14px;background:#59a14f;"></div>
<span class="t" style="left:2717.70px;top:364.66px;font-size:24.5px;line-height:24.5px;color:#444;letter-spacing:0.168px;-webkit-text-stroke:0.35px #fff;">green</span>
<div style="left:2692px;top:403.1px;width:14px;height:14px;background:#bab0ac;"></div>
<span class="t" style="left:2717.70px;top:398.66px;font-size:24.5px;line-height:24.5px;color:#444;letter-spacing:0.535px;-webkit-text-stroke:0.35px #fff;">grey</span>
<div style="left:2692px;top:437.2px;width:14px;height:14px;background:#e15759;"></div>
<span class="t" style="left:2717.70px;top:432.66px;font-size:24.5px;line-height:24.5px;color:#444;letter-spacing:0.130px;-webkit-text-stroke:0.35px #fff;">red</span>
</section>
<footer aria-label="Sheet tabs and status bar">
<div style="left:0px;top:1818px;width:3000px;height:62px;background:#e6e6e6;"></div>
<div style="left:0px;top:1818px;width:3000px;height:1.4px;background:#c4c4c4;"></div>
<div style="left:371px;top:1820px;width:112px;height:58px;background:#fafafa;"></div>
<div style="left:260.0px;top:1821px;width:1px;height:57px;background:#c8c8c8;"></div>
<div style="left:370.0px;top:1821px;width:1px;height:57px;background:#c8c8c8;"></div>
<div style="left:482.5px;top:1821px;width:1px;height:57px;background:#c8c8c8;"></div>
<div style="left:596.0px;top:1821px;width:1px;height:57px;background:#c8c8c8;"></div>
<div style="left:710.0px;top:1821px;width:1px;height:57px;background:#c8c8c8;"></div>
<div style="left:742.0px;top:1821px;width:1px;height:57px;background:#c8c8c8;"></div>
<div style="left:774.0px;top:1821px;width:1px;height:57px;background:#c8c8c8;"></div>
<div style="left:806.0px;top:1821px;width:1px;height:57px;background:#c8c8c8;"></div>
<svg class="i" style="left:16px;top:1843px;" width="9" height="11.5" viewBox="0 0 9 11.5"><ellipse cx="4.5" cy="2.54" rx="3.8" ry="1.84" fill="none" stroke="#666" stroke-width="1.2"/><path d="M0.7 2.54 V8.96 A3.8 1.84 0 0 0 8.3 8.96 V2.54" fill="none" stroke="#666" stroke-width="1.2"/></svg>
<span class="t" style="left:33.20px;top:1836.04px;font-size:25px;line-height:25px;color:#6f6f6f;letter-spacing:-0.461px;-webkit-text-stroke:0.35px #e6e6e6;">Data Source</span>
<span class="t" style="left:274.00px;top:1836.04px;font-size:25px;line-height:25px;color:#6f6f6f;letter-spacing:-1.083px;-webkit-text-stroke:0.35px #e6e6e6;">Sheet 1</span>
<span class="t" style="left:383.00px;top:1836.04px;font-size:25px;line-height:25px;color:#555;font-weight:bold;letter-spacing:-0.433px;">Sheet 2</span>
<span class="t" style="left:495.70px;top:1836.04px;font-size:25px;line-height:25px;color:#6f6f6f;letter-spacing:-0.597px;-webkit-text-stroke:0.35px #e6e6e6;">Sheet 3</span>
<span class="t" style="left:608.80px;top:1836.04px;font-size:25px;line-height:25px;color:#6f6f6f;letter-spacing:-0.426px;-webkit-text-stroke:0.35px #e6e6e6;">Sheet 4</span>
<svg class="i" style="left:719.5px;top:1842.5px;" width="16" height="16" viewBox="0 0 16 16"><rect x="0.7" y="0.7" width="10.6" height="9.6" fill="none" stroke="#777" stroke-width="1.2"/><path d="M3.5 8v-2.5M6 8v-5M8.5 8v-3.5" stroke="#777" stroke-width="1.1"/><path d="M8.8 11.6h7M12.3 8.1v7" stroke="#4a4a4a" stroke-width="2"/></svg>
<svg class="i" style="left:751.5px;top:1842.5px;" width="16" height="16" viewBox="0 0 16 16"><rect x="0.7" y="0.7" width="10.6" height="9.6" fill="none" stroke="#777" stroke-width="1.2"/><path d="M0.7 5.5h10.6M6 0.7v9.6" stroke="#777" stroke-width="1.1"/><path d="M8.8 11.6h7M12.3 8.1v7" stroke="#4a4a4a" stroke-width="2"/></svg>
<svg class="i" style="left:783.5px;top:1842.5px;" width="16" height="16" viewBox="0 0 16 16"><path d="M0.7 1.2 L5.7 3 L10.7 1.2 V9 L5.7 10.8 L0.7 9 Z M5.7 3 V10.8" fill="none" stroke="#777" stroke-width="1.2"/><path d="M8.8 11.6h7M12.3 8.1v7" stroke="#4a4a4a" stroke-width="2"/></svg>
<div style="left:0px;top:1878px;width:3000px;height:40px;background:#ebebeb;"></div>
<div style="left:0px;top:1878px;width:3000px;height:1px;background:#c8c8c8;"></div>
<span class="t" style="left:6.60px;top:1888.58px;font-size:22px;line-height:22px;color:#1a1a1a;letter-spacing:-0.191px;-webkit-text-stroke:0.35px #ebebeb;">4 marks</span>
<span class="t" style="left:117.30px;top:1888.58px;font-size:22px;line-height:22px;color:#1a1a1a;letter-spacing:-0.435px;-webkit-text-stroke:0.35px #ebebeb;">1 row by 4 columns</span>
<span class="t" style="left:333.70px;top:1888.58px;font-size:22px;line-height:22px;color:#1a1a1a;letter-spacing:-0.404px;-webkit-text-stroke:0.35px #ebebeb;">SUM of AGG(Value to Plot): 1,233.3</span>
<div style="left:2378px;top:1880px;width:2px;height:38px;background:#c4c4c4;"></div>
<div style="left:2632px;top:1880px;width:2px;height:38px;background:#c4c4c4;"></div>
<div style="left:2686px;top:1880px;width:2px;height:38px;background:#c4c4c4;"></div>
<div style="left:2740px;top:1880px;width:2px;height:38px;background:#c4c4c4;"></div>
<div style="left:2834px;top:1880px;width:2px;height:38px;background:#c4c4c4;"></div>
<div style="left:2911.5px;top:1880px;width:2px;height:38px;background:#c4c4c4;"></div>
<svg class="i" style="left:2846px;top:1893px;" width="8" height="10" viewBox="0 0 8 10"><path d="M1 0V10" stroke="#b4b4b4" stroke-width="1.3"/><path d="M7.5 0.5 L2.5 5 L7.5 9.5 Z" fill="#b4b4b4"/></svg>
<svg class="i" style="left:2863px;top:1893px;" width="6" height="10" viewBox="0 0 6 10"><path d="M5.5 0.5 L0.5 5 L5.5 9.5 Z" fill="#b4b4b4"/></svg>
<svg class="i" style="left:2879px;top:1893px;" width="6" height="10" viewBox="0 0 6 10"><path d="M0.5 0.5 L5.5 5 L0.5 9.5 Z" fill="#b4b4b4"/></svg>
<svg class="i" style="left:2894px;top:1893px;" width="8" height="10" viewBox="0 0 8 10"><path d="M7 0V10" stroke="#b4b4b4" stroke-width="1.3"/><path d="M0.5 0.5 L5.5 5 L0.5 9.5 Z" fill="#b4b4b4"/></svg>
<svg class="i" style="left:2928px;top:1893px;" width="11" height="11" viewBox="0 0 11 11"><rect x="0" y="0" width="3" height="3" fill="#b0b0b0"/><rect x="0" y="4" width="3" height="3" fill="#b0b0b0"/><rect x="0" y="8" width="3" height="3" fill="#b0b0b0"/><rect x="4" y="0" width="3" height="3" fill="#b0b0b0"/><rect x="4" y="4" width="3" height="3" fill="#b0b0b0"/><rect x="4" y="8" width="3" height="3" fill="#b0b0b0"/><rect x="8" y="0" width="3" height="3" fill="#b0b0b0"/><rect x="8" y="4" width="3" height="3" fill="#b0b0b0"/><rect x="8" y="8" width="3" height="3" fill="#b0b0b0"/></svg>
<svg class="i" style="left:2954px;top:1893px;" width="11" height="11" viewBox="0 0 11 11"><rect x="0" y="0" width="11" height="6.5" fill="#b8b8b8"/><rect x="0" y="8" width="3" height="3" fill="#b0b0b0"/><rect x="4" y="8" width="3" height="3" fill="#b0b0b0"/><rect x="8" y="8" width="3" height="3" fill="#b0b0b0"/></svg>
<div style="left:2980px;top:1893px;width:11px;height:11px;background:#5a5a5a;"></div>
</footer>
<section aria-label="Calculation editor: Rate variance">
<div style="left:899px;top:401px;width:1404px;height:435px;background:#fff;border-top:1px solid #c6c6c6;"></div>
<div style="left:908px;top:403px;width:1444px;height:433px;background:#fff;border:8px solid #ff0000;"></div>
<div style="left:900px;top:414px;width:279px;height:46px;background:#fff;border:2px solid #c3c3c3;border-radius:4px;clip-path:inset(0 0 0 16px);"></div>
<span class="t" style="left:923.80px;top:423.80px;font-size:28px;line-height:28px;color:#555;letter-spacing:0.011px;-webkit-text-stroke:0.3px #555;">Rate variance</span>
<svg class="i" style="left:1194px;top:430px;" width="9.5" height="13" viewBox="0 0 9.5 13"><ellipse cx="4.75" cy="2.7800000000000002" rx="4.05" ry="2.08" fill="none" stroke="#777" stroke-width="1.2"/><path d="M0.7 2.7800000000000002 V10.22 A4.05 2.08 0 0 0 8.8 10.22 V2.7800000000000002" fill="none" stroke="#777" stroke-width="1.2"/></svg>
<span class="t" style="left:1209.50px;top:426.78px;font-size:22px;line-height:22px;color:#939393;letter-spacing:-0.920px;-webkit-text-stroke:0.15px #fff;">Added Data</span>
<svg class="i" style="left:2279.5px;top:431.0px;" width="11" height="11" viewBox="0 0 11 11"><path d="M0.7 0.7 L10.3 10.3 M10.3 0.7 L0.7 10.3" stroke="#666" stroke-width="1.3" fill="none"/></svg>
<div style="left:916px;top:472px;width:1377px;height:1px;background:#c8c8c8;"></div>
<span class="t" style="left:910.40px;top:490.30px;font-size:27px;line-height:27px;font-family:'Liberation Mono',monospace;color:#000;-webkit-text-stroke:0.55px #fff;transform:scaleY(0.86);transform-origin:0 20.70px;clip-path:inset(0 0 0 6px);"><span style="color:#000">(</span><span style="color:#ee8a39">[Average February]</span><span style="color:#000;font-weight:bold;-webkit-text-stroke:0.2px #fff">-</span><span style="color:#ee8a39">[Average Jan]</span><span style="color:#000">)*</span><span style="color:#4191b6">sum</span><span style="color:#000;font-weight:bold;-webkit-text-stroke:0.2px #fff">(</span><span style="color:#ee8a39">[Total Volume Jan]</span><span style="color:#000;font-weight:bold;-webkit-text-stroke:0.2px #fff">)</span></span>
<div style="left:1848.5px;top:485px;width:2px;height:32px;background:#000;"></div>
<svg class="i" style="left:2295px;top:613px;" width="7" height="10" viewBox="0 0 7 10"><path d="M0.5 0.5 L6.5 5 L0.5 9.5 Z" fill="#aaa"/></svg>
<span class="t" style="left:914.50px;top:790.24px;font-size:27px;line-height:27px;color:#868686;letter-spacing:0.455px;-webkit-text-stroke:0.35px #fff;clip-path:inset(0 0 0 2px);">The calculation is valid.</span>
<span class="t" style="left:1777.00px;top:789.74px;font-size:27px;line-height:27px;color:#929292;letter-spacing:0.524px;-webkit-text-stroke:0.35px #fff;">Sheets Affected</span>
<svg class="i" style="left:1978.0px;top:800.0px;" width="7" height="4" viewBox="0 0 7 4"><path d="M0 0 H7 L3.5 4 Z" fill="#888"/></svg>
<div style="left:1999.5px;top:783px;width:155px;height:39px;background:#fff;border:2px solid #c3c3c3;border-radius:4px;"></div>
<span class="t" style="left:2046.50px;top:790.44px;font-size:25px;line-height:25px;color:#9e9e9e;letter-spacing:-0.207px;-webkit-text-stroke:0.35px #fff;">Apply</span>
<div style="left:2166px;top:783px;width:126px;height:39px;background:#2ecc94;border-radius:4px;"></div>
<span class="t" style="left:2213.00px;top:790.44px;font-size:25px;line-height:25px;color:#fff;letter-spacing:-1.810px;-webkit-text-stroke:0.35px #2ecc94;">OK</span>
</section>
<section aria-label="Calculation editor: value calculated">
<div style="left:1333px;top:899px;width:1412px;height:430px;background:#fff;"></div>
<div style="left:1678px;top:897px;width:195px;height:2px;background:#bab0ac;"></div>
<div style="left:1325px;top:889px;width:1420px;height:444px;border:8px solid #0000ff;"></div>
<div style="left:1349px;top:909.5px;width:270px;height:45.5px;background:#fff;border:2px solid #c3c3c3;border-radius:4px;"></div>
<span class="t" style="left:1362.80px;top:918.80px;font-size:28px;line-height:28px;color:#555;letter-spacing:0.306px;-webkit-text-stroke:0.3px #555;">value calculated</span>
<svg class="i" style="left:1634px;top:925px;" width="9.5" height="13" viewBox="0 0 9.5 13"><ellipse cx="4.75" cy="2.7800000000000002" rx="4.05" ry="2.08" fill="none" stroke="#777" stroke-width="1.2"/><path d="M0.7 2.7800000000000002 V10.22 A4.05 2.08 0 0 0 8.8 10.22 V2.7800000000000002" fill="none" stroke="#777" stroke-width="1.2"/></svg>
<span class="t" style="left:1649.30px;top:921.88px;font-size:22px;line-height:22px;color:#939393;letter-spacing:-0.617px;-webkit-text-stroke:0.15px #fff;">Sheet1 (boom)</span>
<svg class="i" style="left:2720.5px;top:925.5px;" width="11" height="11" viewBox="0 0 11 11"><path d="M0.7 0.7 L10.3 10.3 M10.3 0.7 L0.7 10.3" stroke="#666" stroke-width="1.3" fill="none"/></svg>
<div style="left:1349px;top:967px;width:1384px;height:1px;background:#c8c8c8;"></div>
<span class="t" style="left:1351.20px;top:984.10px;font-size:27px;line-height:27px;font-family:'Liberation Mono',monospace;color:#000;-webkit-text-stroke:0.55px #fff;transform:scaleY(0.86);transform-origin:0 20.70px;"><span style="color:#000">CASE </span><span style="color:#4191b6">ATTR</span><span style="color:#000">(</span><span style="color:#ee8a39">[Category]</span><span style="color:#000">)</span></span>
<span class="t" style="left:1351.20px;top:1017.10px;font-size:27px;line-height:27px;font-family:'Liberation Mono',monospace;color:#000;-webkit-text-stroke:0.55px #fff;transform:scaleY(0.86);transform-origin:0 20.70px;"><span style="color:#000">When </span><span style="color:#7a7a7a">'Starting Sales'</span><span style="color:#000"> THEN </span><span style="color:#4191b6">SUM</span><span style="color:#000">(</span><span style="color:#ee8a39">[Added Data].[Total Sales Jan]</span><span style="color:#000">)</span></span>
<span class="t" style="left:1351.20px;top:1050.10px;font-size:27px;line-height:27px;font-family:'Liberation Mono',monospace;color:#000;-webkit-text-stroke:0.55px #fff;transform:scaleY(0.86);transform-origin:0 20.70px;"><span style="color:#000">When </span><span style="color:#7a7a7a">'Ending Sales'</span><span style="color:#000"> THEN </span><span style="color:#4191b6">SUM</span><span style="color:#000">(</span><span style="color:#ee8a39">[Added Data].[Total Sales Feb]</span><span style="color:#000">)</span></span>
<span class="t" style="left:1351.20px;top:1083.10px;font-size:27px;line-height:27px;font-family:'Liberation Mono',monospace;color:#000;-webkit-text-stroke:0.55px #fff;transform:scaleY(0.86);transform-origin:0 20.70px;"><span style="color:#000">WHEN </span><span style="color:#7a7a7a">'Volume Variance'</span><span style="color:#000"> THEN </span><span style="color:#ee8a39">[Added Data].[Volume Variance]</span></span>
<span class="t" style="left:1351.20px;top:1116.10px;font-size:27px;line-height:27px;font-family:'Liberation Mono',monospace;color:#000;-webkit-text-stroke:0.55px #fff;transform:scaleY(0.86);transform-origin:0 20.70px;"><span style="color:#000">WHEN </span><span style="color:#7a7a7a">'Rate Variance'</span><span style="color:#000"> THEN </span><span style="color:#ee8a39">[Added Data].[Rate variance]</span></span>
<span class="t" style="left:1351.20px;top:1149.10px;font-size:27px;line-height:27px;font-family:'Liberation Mono',monospace;color:#000;-webkit-text-stroke:0.55px #fff;transform:scaleY(0.86);transform-origin:0 20.70px;"><span style="color:#000">END</span></span>
<span class="t" style="left:1350.00px;top:1286.74px;font-size:27px;line-height:27px;color:#868686;letter-spacing:0.635px;-webkit-text-stroke:0.35px #fff;">The calculation is valid.</span>
<span class="t" style="left:2218.00px;top:1285.74px;font-size:27px;line-height:27px;color:#929292;letter-spacing:0.510px;-webkit-text-stroke:0.35px #fff;">Sheets Affected</span>
<svg class="i" style="left:2419.0px;top:1296.0px;" width="7" height="4" viewBox="0 0 7 4"><path d="M0 0 H7 L3.5 4 Z" fill="#888"/></svg>
<div style="left:2440px;top:1279px;width:155px;height:39px;background:#fff;border:2px solid #c3c3c3;border-radius:4px;"></div>
<span class="t" style="left:2487.00px;top:1286.44px;font-size:25px;line-height:25px;color:#9e9e9e;letter-spacing:-0.247px;-webkit-text-stroke:0.35px #fff;">Apply</span>
<div style="left:2607px;top:1279px;width:126px;height:39px;background:#2ecc94;border-radius:4px;"></div>
<span class="t" style="left:2654.00px;top:1286.44px;font-size:25px;line-height:25px;color:#fff;letter-spacing:-1.810px;-webkit-text-stroke:0.35px #2ecc94;">OK</span>
</section>
<svg class="i" style="left:1669.3px;top:826px;" width="332.70000000000005" height="295" viewBox="0 0 332.70000000000005 295"><path d="M10.0 10.0 L312.9 276.4" stroke="#ff0000" stroke-width="2"/><path d="M322.7 285.0 L310.2 279.6 L315.7 273.3 Z" fill="#ff0000"/></svg>
<section aria-label="Calculation editor: Value to Plot">
<div style="left:1529px;top:1457px;width:1411px;height:436px;background:#fff;border:1px solid #c6c6c6;box-shadow:5px 5px 6px rgba(0,0,0,0.32);"></div>
<div style="left:1542px;top:1470px;width:270px;height:45.5px;background:#fff;border:2px solid #c3c3c3;border-radius:4px;"></div>
<span class="t" style="left:1555.70px;top:1479.70px;font-size:28px;line-height:28px;color:#555;letter-spacing:0.370px;-webkit-text-stroke:0.3px #555;">Value to Plot</span>
<svg class="i" style="left:1827px;top:1486px;" width="9.5" height="13" viewBox="0 0 9.5 13"><ellipse cx="4.75" cy="2.7800000000000002" rx="4.05" ry="2.08" fill="none" stroke="#777" stroke-width="1.2"/><path d="M0.7 2.7800000000000002 V10.22 A4.05 2.08 0 0 0 8.8 10.22 V2.7800000000000002" fill="none" stroke="#777" stroke-width="1.2"/></svg>
<span class="t" style="left:1842.50px;top:1482.68px;font-size:22px;line-height:22px;color:#939393;letter-spacing:-0.648px;-webkit-text-stroke:0.15px #fff;">Sheet1 (boom)</span>
<svg class="i" style="left:2914.5px;top:1487.0px;" width="11" height="11" viewBox="0 0 11 11"><path d="M0.7 0.7 L10.3 10.3 M10.3 0.7 L0.7 10.3" stroke="#666" stroke-width="1.3" fill="none"/></svg>
<div style="left:1542px;top:1528px;width:1385px;height:1px;background:#c8c8c8;"></div>
<div style="left:1543px;top:1530.5px;width:1380px;height:34px;background:#fffff2;"></div>
<span class="t" style="left:1544.20px;top:1536.09px;font-size:26px;line-height:26px;color:#333;letter-spacing:0.829px;-webkit-text-stroke:0.35px #fffff2;">Results are computed along Table (across).</span>
<span class="t" style="left:1531.40px;top:1569.30px;font-size:27px;line-height:27px;font-family:'Liberation Mono',monospace;color:#000;-webkit-text-stroke:0.55px #fff;transform:scaleY(0.86);transform-origin:0 20.70px;clip-path:inset(0 0 0 11.8px);"><span style="color:#000">IF </span><span style="color:#4191b6">ATTR</span><span style="color:#000">(</span><span style="color:#ee8a39">[ID]</span><span style="color:#000">) = 4  THEN </span><span style="color:#ee8a39">[value calculated]</span><span style="color:#000"> ELSE </span><span style="color:#4191b6">RUNNING_SUM</span><span style="color:#000">(</span><span style="color:#ee8a39">[value calculated]</span><span style="color:#000">) END</span></span>
<svg class="i" style="left:2929.5px;top:1670px;" width="7" height="10" viewBox="0 0 7 10"><path d="M0.5 0.5 L6.5 5 L0.5 9.5 Z" fill="#aaa"/></svg>
<div style="left:1543px;top:1771px;width:1360px;height:20px;background:#f1f1f1;"></div>
<div style="left:1556px;top:1771px;width:1347px;height:20px;background:#e0e0e0;border-radius:1px;"></div>
<span class="t" style="left:2618.90px;top:1805.20px;font-size:28px;line-height:28px;color:#0000ff;letter-spacing:-0.085px;-webkit-text-stroke:0.35px #fff;">Default Table Calculation</span>
<span class="t" style="left:1543.00px;top:1848.74px;font-size:27px;line-height:27px;color:#868686;letter-spacing:0.635px;-webkit-text-stroke:0.35px #fff;">The calculation is valid.</span>
<span class="t" style="left:2412.00px;top:1847.74px;font-size:27px;line-height:27px;color:#929292;letter-spacing:0.524px;-webkit-text-stroke:0.35px #fff;">Sheets Affected</span>
<svg class="i" style="left:2613.0px;top:1858.0px;" width="7" height="4" viewBox="0 0 7 4"><path d="M0 0 H7 L3.5 4 Z" fill="#888"/></svg>
<div style="left:2633.5px;top:1841px;width:155px;height:39px;background:#fff;border:2px solid #c3c3c3;border-radius:4px;"></div>
<span class="t" style="left:2681.00px;top:1848.44px;font-size:25px;line-height:25px;color:#9e9e9e;letter-spacing:-0.207px;-webkit-text-stroke:0.35px #fff;">Apply</span>
<div style="left:2801px;top:1841px;width:126px;height:39px;background:#2ecc94;border-radius:4px;"></div>
<span class="t" style="left:2848.00px;top:1848.44px;font-size:25px;line-height:25px;color:#fff;letter-spacing:-1.810px;-webkit-text-stroke:0.35px #2ecc94;">OK</span>
</section>
<svg class="i" style="left:1791.5px;top:1323px;" width="317.0" height="254.5" viewBox="0 0 317.0 254.5"><path d="M10.0 10.0 L296.8 236.4" stroke="#0000ff" stroke-width="2"/><path d="M307.0 244.5 L294.2 239.7 L299.4 233.1 Z" fill="#0000ff"/></svg>
<svg class="i" style="left:0.19999999999999996px;top:-0.5px;" width="28" height="40" viewBox="0 0 28 40"><path d="M1.5 1.5 V34.6 L8.8 27.7 L14 38.6 L18.9 36.4 L13.8 25.4 L25.2 25.4 Z" fill="#fff" stroke="#000" stroke-width="1.4" stroke-linejoin="miter"/></svg>
<svg class="i" style="left:918.2px;top:483.3px;" width="28" height="40" viewBox="0 0 28 40"><path d="M1.5 1.5 V34.6 L8.8 27.7 L14 38.6 L18.9 36.4 L13.8 25.4 L25.2 25.4 Z" fill="#fff" stroke="#000" stroke-width="1.4" stroke-linejoin="miter"/></svg>
</body></html>
